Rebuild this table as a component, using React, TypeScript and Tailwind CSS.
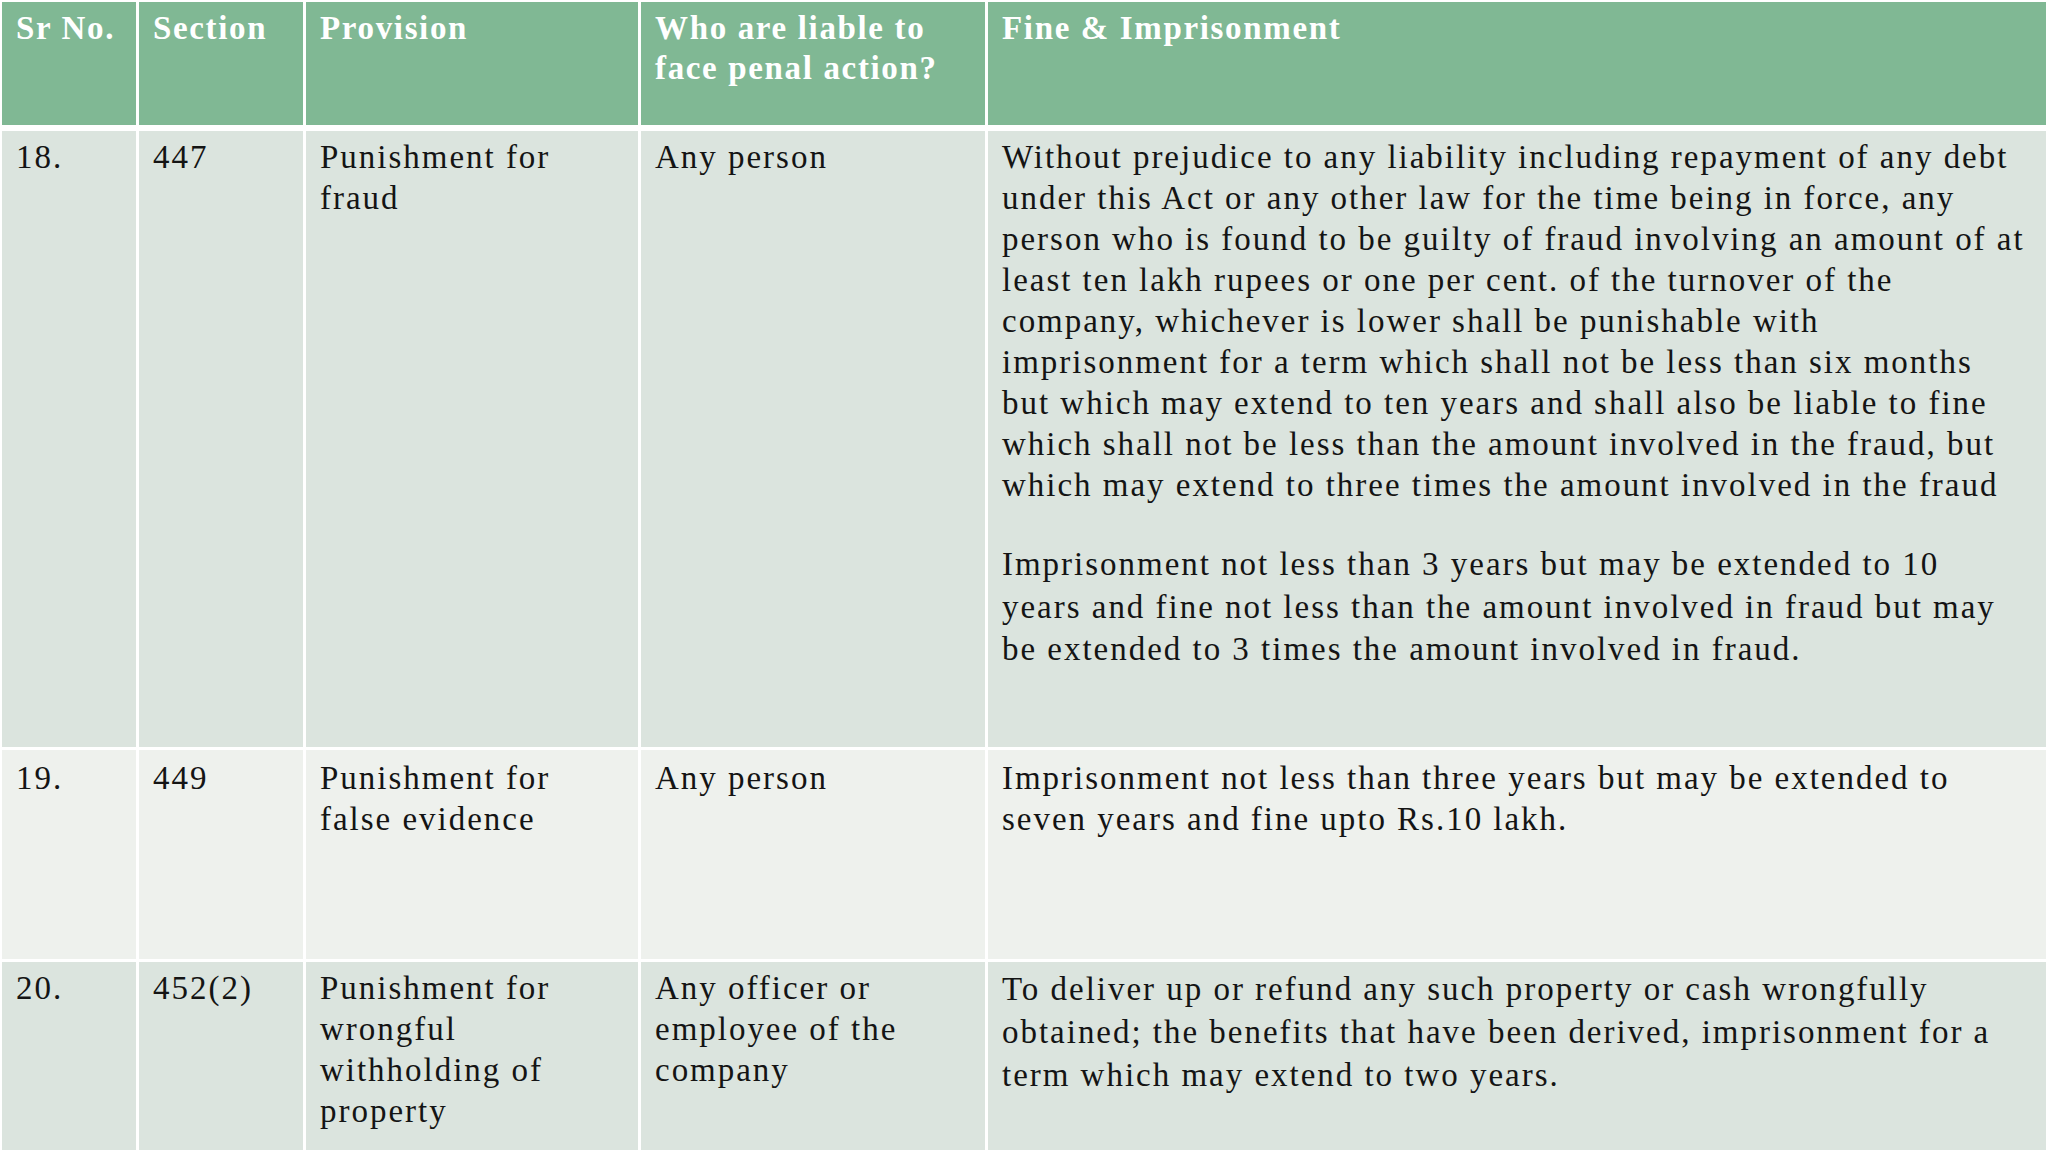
import React from "react";

const Lines = ({ lines, className = "" }: { lines: string[]; className?: string }) => (
  <div className={className}>
    {lines.map((l, i) => (
      <div key={i} className="whitespace-nowrap">
        {l}
      </div>
    ))}
  </div>
);

const head = "bg-[#80b894] text-white font-bold pl-[14px] pt-[6px] tracking-[0.05em]";
const c1 = "bg-[#dbe4de] pl-[14px] pt-[6px]";
const c2 = "bg-[#eef1ed] pl-[14px] pt-[8px]";

export default function App() {
  return (
    <div
      className="w-[2048px] h-[1152px] bg-white p-[2px] text-[33px] leading-[41px] tracking-[0.06em] text-[#141414] overflow-hidden"
      style={{ fontFamily: '"Liberation Serif", "Times New Roman", serif' }}
    >
      <div className="grid grid-cols-[134px_164px_332px_344px_1fr] grid-rows-[123px_619px_209px_188px] gap-x-[3px] gap-y-[3px]">
        <div className={head}>Sr No.</div>
        <div className={head}>Section</div>
        <div className={head}>Provision</div>
        <div className={head}>
          <Lines lines={["Who are liable to", "face penal action?"]} className="leading-[40px]" />
        </div>
        <div className={head}>Fine &amp; Imprisonment</div>

        <div className={c1 + " mt-[3px]"}>18.</div>
        <div className={c1 + " mt-[3px]"}>447</div>
        <div className={c1 + " mt-[3px]"}>
          <Lines lines={["Punishment for", "fraud"]} />
        </div>
        <div className={c1 + " mt-[3px]"}>Any person</div>
        <div className={c1 + " mt-[3px]"}>
          <Lines
            lines={[
              "Without prejudice to any liability including repayment of any debt",
              "under this Act or any other law for the time being in force, any",
              "person who is found to be guilty of fraud involving an amount of at",
              "least ten lakh rupees or one per cent. of the turnover of the",
              "company, whichever is lower shall be  punishable with",
              "imprisonment for a term which shall not be less than six months",
              "but which may extend to ten years and shall also be liable to fine",
              "which shall not be  less than the amount involved in the fraud, but",
              "which may extend to three times the amount involved in the fraud",
            ]}
          />
          <Lines
            className="mt-[37px] leading-[42.5px]"
            lines={[
              "Imprisonment not less than 3 years but may be extended to 10",
              "years and fine not less than the amount involved in fraud but may",
              "be extended to 3 times the amount involved in fraud.",
            ]}
          />
        </div>

        <div className={c2}>19.</div>
        <div className={c2}>449</div>
        <div className={c2}>
          <Lines lines={["Punishment for", "false evidence"]} />
        </div>
        <div className={c2}>Any person</div>
        <div className={c2}>
          <Lines
            lines={[
              "Imprisonment not less than three years but may be extended to",
              "seven years and fine upto Rs.10 lakh.",
            ]}
          />
        </div>

        <div className={c1}>20.</div>
        <div className={c1}>452(2)</div>
        <div className={c1}>
          <Lines lines={["Punishment for", "wrongful", "withholding of", "property"]} />
        </div>
        <div className={c1}>
          <Lines lines={["Any officer or", "employee of the", "company"]} />
        </div>
        <div className={c1}>
          <Lines
            className="leading-[43px]"
            lines={[
              "To deliver up or refund any such property or cash wrongfully",
              "obtained; the benefits that have been derived, imprisonment for a",
              "term which may extend to two years.",
            ]}
          />
        </div>
      </div>
    </div>
  );
}
